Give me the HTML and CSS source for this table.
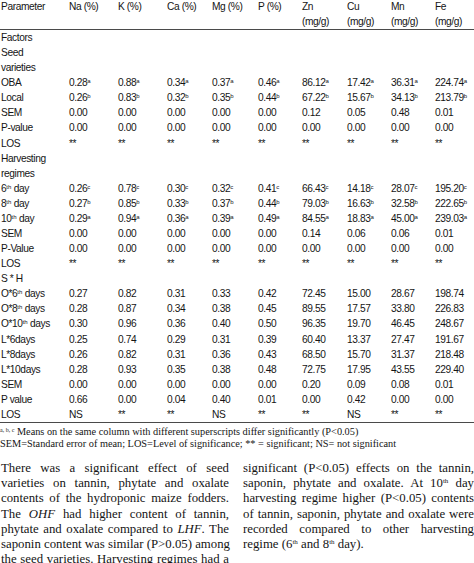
FILE: index.html
```html
<!DOCTYPE html>
<html>
<head>
<meta charset="utf-8">
<link rel="stylesheet" href="styles.css">
</head>
<body>
<div class="page">
  <div class="tbl">
    <div class="row head">
      <div>Parameter</div><div>Na (%)</div><div>K (%)</div><div>Ca (%)</div><div>Mg (%)</div><div>P (%)</div><div>Zn<br>(mg/g)</div><div>Cu<br>(mg/g)</div><div>Mn<br>(mg/g)</div><div>Fe<br>(mg/g)</div>
    </div>
    <div class="body">
      <div class="row"><div>Factors</div></div>
      <div class="row"><div>Seed</div></div>
      <div class="row"><div>varieties</div></div>
      <div class="row"><div>OBA</div><div>0.28<sup>a</sup></div><div>0.88<sup>a</sup></div><div>0.34<sup>a</sup></div><div>0.37<sup>a</sup></div><div>0.46<sup>a</sup></div><div>86.12<sup>a</sup></div><div>17.42<sup>a</sup></div><div>36.31<sup>a</sup></div><div>224.74<sup>a</sup></div></div>
      <div class="row"><div>Local</div><div>0.26<sup>b</sup></div><div>0.83<sup>b</sup></div><div>0.32<sup>b</sup></div><div>0.35<sup>b</sup></div><div>0.44<sup>b</sup></div><div>67.22<sup>b</sup></div><div>15.67<sup>b</sup></div><div>34.13<sup>b</sup></div><div>213.79<sup>b</sup></div></div>
      <div class="row"><div>SEM</div><div>0.00</div><div>0.00</div><div>0.00</div><div>0.00</div><div>0.00</div><div>0.12</div><div>0.05</div><div>0.48</div><div>0.01</div></div>
      <div class="row"><div>P-value</div><div>0.00</div><div>0.00</div><div>0.00</div><div>0.00</div><div>0.00</div><div>0.00</div><div>0.00</div><div>0.00</div><div>0.00</div></div>
      <div class="row"><div>LOS</div><div>**</div><div>**</div><div>**</div><div>**</div><div>**</div><div>**</div><div>**</div><div>**</div><div>**</div></div>
      <div class="row"><div>Harvesting</div></div>
      <div class="row"><div>regimes</div></div>
      <div class="row"><div>6<sup>th</sup> day</div><div>0.26<sup>c</sup></div><div>0.78<sup>c</sup></div><div>0.30<sup>c</sup></div><div>0.32<sup>c</sup></div><div>0.41<sup>c</sup></div><div>66.43<sup>c</sup></div><div>14.18<sup>c</sup></div><div>28.07<sup>c</sup></div><div>195.20<sup>c</sup></div></div>
      <div class="row"><div>8<sup>th</sup> day</div><div>0.27<sup>b</sup></div><div>0.85<sup>b</sup></div><div>0.33<sup>b</sup></div><div>0.37<sup>b</sup></div><div>0.44<sup>b</sup></div><div>79.03<sup>b</sup></div><div>16.63<sup>b</sup></div><div>32.58<sup>b</sup></div><div>222.65<sup>b</sup></div></div>
      <div class="row"><div>10<sup>th</sup> day</div><div>0.29<sup>a</sup></div><div>0.94<sup>a</sup></div><div>0.36<sup>a</sup></div><div>0.39<sup>a</sup></div><div>0.49<sup>a</sup></div><div>84.55<sup>a</sup></div><div>18.83<sup>a</sup></div><div>45.00<sup>a</sup></div><div>239.03<sup>a</sup></div></div>
      <div class="row"><div>SEM</div><div>0.00</div><div>0.00</div><div>0.00</div><div>0.00</div><div>0.00</div><div>0.14</div><div>0.06</div><div>0.06</div><div>0.01</div></div>
      <div class="row"><div>P-Value</div><div>0.00</div><div>0.00</div><div>0.00</div><div>0.00</div><div>0.00</div><div>0.00</div><div>0.00</div><div>0.00</div><div>0.00</div></div>
      <div class="row"><div>LOS</div><div>**</div><div>**</div><div>**</div><div>**</div><div>**</div><div>**</div><div>**</div><div>**</div><div>**</div></div>
      <div class="row"><div>S * H</div></div>
      <div class="row"><div>O*6<sup>th</sup> days</div><div>0.27</div><div>0.82</div><div>0.31</div><div>0.33</div><div>0.42</div><div>72.45</div><div>15.00</div><div>28.67</div><div>198.74</div></div>
      <div class="row"><div>O*8<sup>th</sup> days</div><div>0.28</div><div>0.87</div><div>0.34</div><div>0.38</div><div>0.45</div><div>89.55</div><div>17.57</div><div>33.80</div><div>226.83</div></div>
      <div class="row"><div>O*10<sup>th</sup> days</div><div>0.30</div><div>0.96</div><div>0.36</div><div>0.40</div><div>0.50</div><div>96.35</div><div>19.70</div><div>46.45</div><div>248.67</div></div>
      <div class="row"><div>L*6days</div><div>0.25</div><div>0.74</div><div>0.29</div><div>0.31</div><div>0.39</div><div>60.40</div><div>13.37</div><div>27.47</div><div>191.67</div></div>
      <div class="row"><div>L*8days</div><div>0.26</div><div>0.82</div><div>0.31</div><div>0.36</div><div>0.43</div><div>68.50</div><div>15.70</div><div>31.37</div><div>218.48</div></div>
      <div class="row"><div>L*10days</div><div>0.28</div><div>0.93</div><div>0.35</div><div>0.38</div><div>0.48</div><div>72.75</div><div>17.95</div><div>43.55</div><div>229.40</div></div>
      <div class="row"><div>SEM</div><div>0.00</div><div>0.00</div><div>0.00</div><div>0.00</div><div>0.00</div><div>0.20</div><div>0.09</div><div>0.08</div><div>0.01</div></div>
      <div class="row"><div>P value</div><div>0.66</div><div>0.00</div><div>0.04</div><div>0.40</div><div>0.01</div><div>0.00</div><div>0.42</div><div>0.00</div><div>0.00</div></div>
      <div class="row"><div>LOS</div><div>NS</div><div>**</div><div>**</div><div>NS</div><div>**</div><div>**</div><div>NS</div><div>**</div><div>**</div></div>
    </div>
  </div>
  <div class="notes">
    <div class="note"><sup class="fsup">a, b, c</sup> Means on the same column with different superscripts differ significantly (P&lt;0.05)</div>
    <div class="note">SEM=Standard error of mean; LOS=Level of significance; ** = significant; NS= not significant</div>
  </div>
  <div class="text">
    <div class="col left">
      <div class="ln">There was a significant effect of seed</div>
      <div class="ln">varieties on tannin, phytate and oxalate</div>
      <div class="ln">contents of the hydroponic maize fodders.</div>
      <div class="ln">The <i>OHF</i> had higher content of tannin,</div>
      <div class="ln">phytate and oxalate compared to <i>LHF</i>. The</div>
      <div class="ln">saponin content was similar (P&gt;0.05) among</div>
      <div class="ln">the seed varieties. Harvesting regimes had a</div>
    </div>
    <div class="col right">
      <div class="ln">significant (P&lt;0.05) effects on the tannin,</div>
      <div class="ln">saponin, phytate and oxalate. At 10<sup class="tsup">th</sup> day</div>
      <div class="ln">harvesting regime higher (P&lt;0.05) contents</div>
      <div class="ln">of tannin, saponin, phytate and oxalate were</div>
      <div class="ln">recorded compared to other harvesting</div>
      <div class="ln last">regime (6<sup class="tsup">th</sup> and 8<sup class="tsup">th</sup> day).</div>
    </div>
  </div>
</div>
</body>
</html>
```

FILE: styles.css
```css
html, body {
  margin: 0;
  padding: 0;
  background: #ffffff;
  overflow: hidden;
}
.page {
  width: 474px;
  color: #151515;
}
.tbl {
  font-family: "Liberation Sans", Arial, sans-serif;
  font-size: 10.2px;
  letter-spacing: -0.4px;
  border-bottom: 1px solid #4a4a4a;
}
.row {
  display: grid;
  grid-template-columns: 68px 49px 49px 45px 46px 44px 45px 44px 44px 40px;
  padding-left: 1px;
  height: 15.08px;
  line-height: 15.08px;
  white-space: nowrap;
}
.row.head {
  height: 29px;
  line-height: 14.5px;
  border-bottom: 1px solid #4a4a4a;
}
.row sup {
  font-size: 6px;
  letter-spacing: 0;
  vertical-align: 0;
  position: relative;
  top: -3px;
  line-height: 0;
}
.notes {
  font-family: "Liberation Serif", "Times New Roman", serif;
  font-size: 10.3px;
  line-height: 12px;
  padding-top: 3px;
  white-space: nowrap;
}
.fsup {
  font-size: 6px;
  vertical-align: 0;
  position: relative;
  top: -3.5px;
  line-height: 0;
}
.text {
  display: flex;
  gap: 14px;
  padding-top: 11px;
  padding-left: 1px;
  font-family: "Liberation Serif", "Times New Roman", serif;
  font-size: 12.8px;
  line-height: 15.2px;
}
.col.left {
  width: 228px;
  flex: none;
}
.col.right {
  width: 231px;
  flex: none;
}
.ln {
  text-align: justify;
  text-align-last: justify;
  white-space: nowrap;
}
.ln.last {
  text-align-last: left;
}
.tsup {
  font-size: 7px;
  vertical-align: 0;
  position: relative;
  top: -4px;
  line-height: 0;
}
```
